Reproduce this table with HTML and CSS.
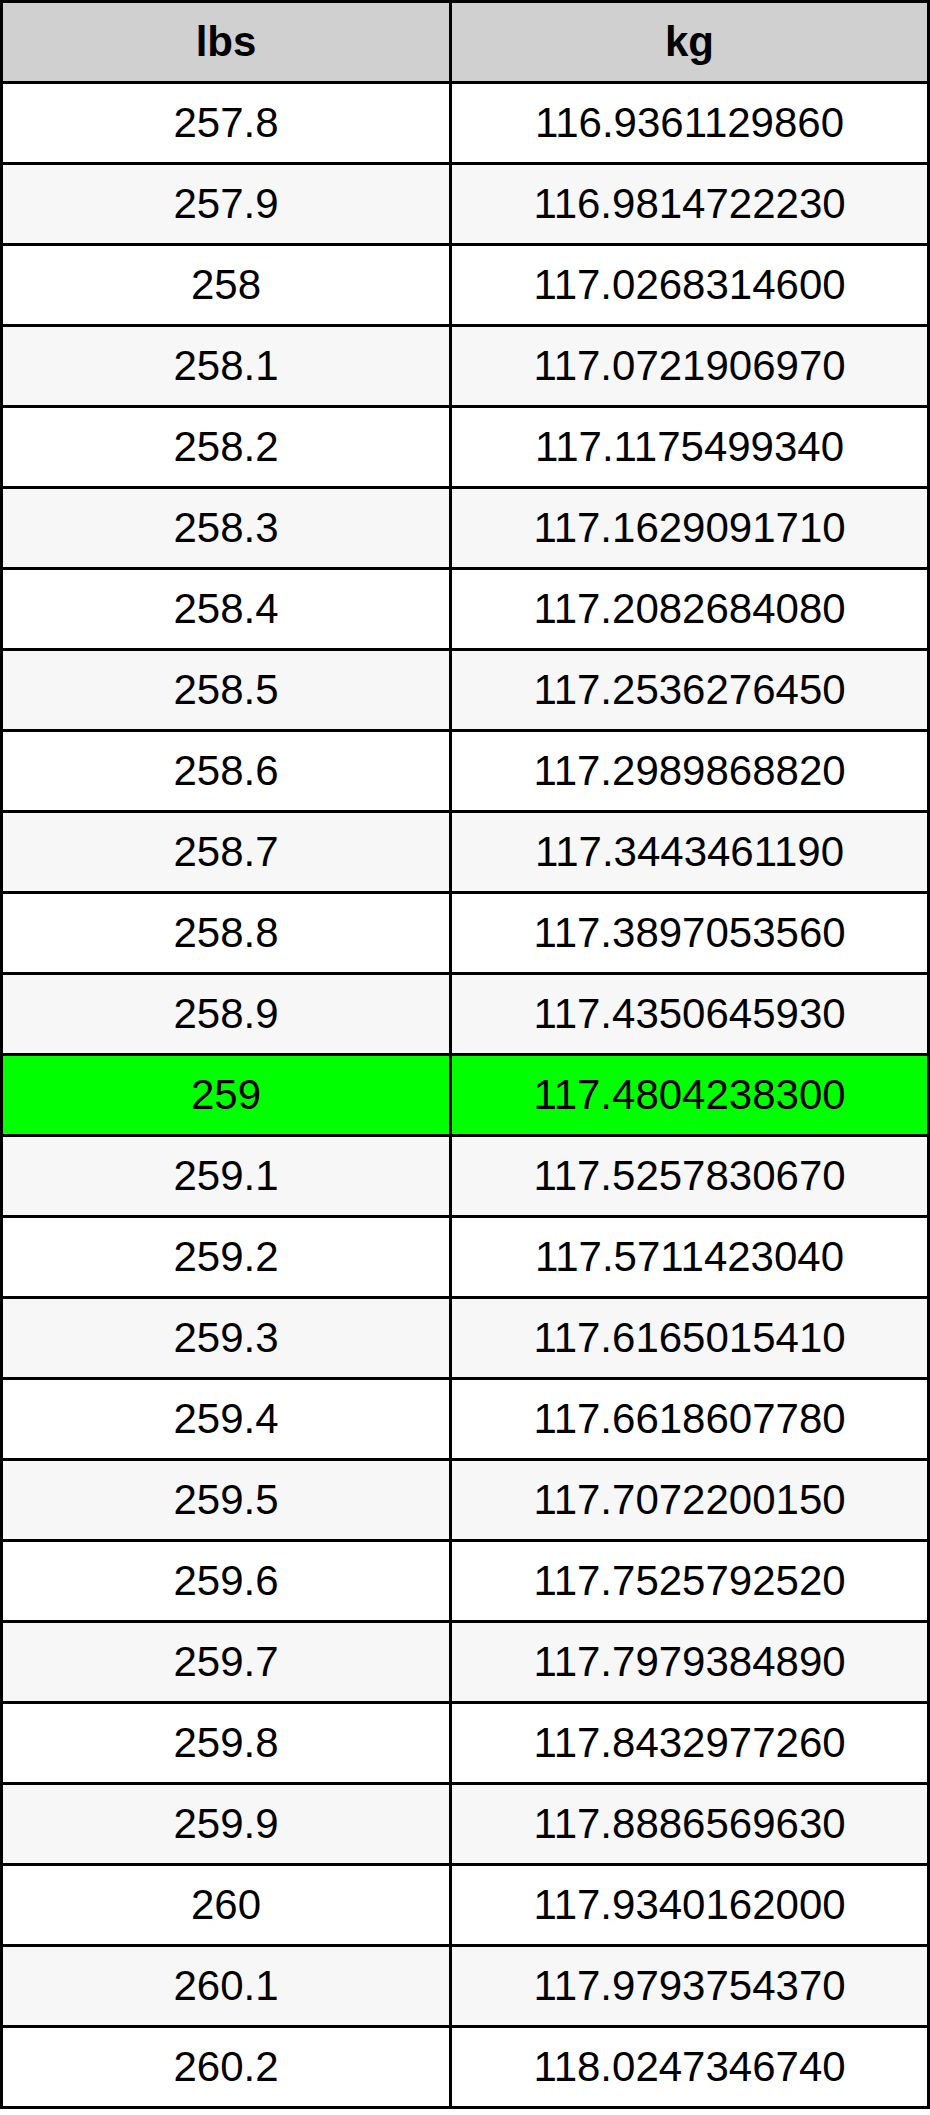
FILE: index.html
```html
<!DOCTYPE html>
<html>
<head>
<meta charset="utf-8">
<title>lbs to kg</title>
<link rel="stylesheet" href="styles.css">
</head>
<body>
<table class="conv">
<colgroup><col class="c-lbs"><col class="c-kg"></colgroup>
<thead>
<tr><th>lbs</th><th>kg</th></tr>
</thead>
<tbody>
<tr><td>257.8</td><td>116.9361129860</td></tr>
<tr><td>257.9</td><td>116.9814722230</td></tr>
<tr><td>258</td><td>117.0268314600</td></tr>
<tr><td>258.1</td><td>117.0721906970</td></tr>
<tr><td>258.2</td><td>117.1175499340</td></tr>
<tr><td>258.3</td><td>117.1629091710</td></tr>
<tr><td>258.4</td><td>117.2082684080</td></tr>
<tr><td>258.5</td><td>117.2536276450</td></tr>
<tr><td>258.6</td><td>117.2989868820</td></tr>
<tr><td>258.7</td><td>117.3443461190</td></tr>
<tr><td>258.8</td><td>117.3897053560</td></tr>
<tr><td>258.9</td><td>117.4350645930</td></tr>
<tr class="hl"><td>259</td><td>117.4804238300</td></tr>
<tr><td>259.1</td><td>117.5257830670</td></tr>
<tr><td>259.2</td><td>117.5711423040</td></tr>
<tr><td>259.3</td><td>117.6165015410</td></tr>
<tr><td>259.4</td><td>117.6618607780</td></tr>
<tr><td>259.5</td><td>117.7072200150</td></tr>
<tr><td>259.6</td><td>117.7525792520</td></tr>
<tr><td>259.7</td><td>117.7979384890</td></tr>
<tr><td>259.8</td><td>117.8432977260</td></tr>
<tr><td>259.9</td><td>117.8886569630</td></tr>
<tr><td>260</td><td>117.9340162000</td></tr>
<tr><td>260.1</td><td>117.9793754370</td></tr>
<tr><td>260.2</td><td>118.0247346740</td></tr>
</tbody>
</table>
</body>
</html>
```

FILE: styles.css
```css
html, body {
  margin: 0;
  padding: 0;
  background: #ffffff;
}

.conv {
  border-collapse: collapse;
  table-layout: fixed;
  width: 930px;
  border: 3px solid #000;
  font-family: "Liberation Sans", Arial, sans-serif;
  font-size: 42px;
  color: #000;
}

.c-lbs { width: 449px; }
.c-kg { width: 478px; }

.conv th,
.conv td {
  border: 3px solid #000;
  padding: 0;
  text-align: center;
  vertical-align: middle;
  line-height: 1;
}

.conv tr { height: 81px; }

.conv th {
  background: #d0d0d0;
  font-weight: bold;
}

.conv tbody tr:nth-child(odd) td { background: #ffffff; }
.conv tbody tr:nth-child(even) td { background: #f7f7f7; }
.conv tbody tr.hl td { background: #00ff00; }
```
